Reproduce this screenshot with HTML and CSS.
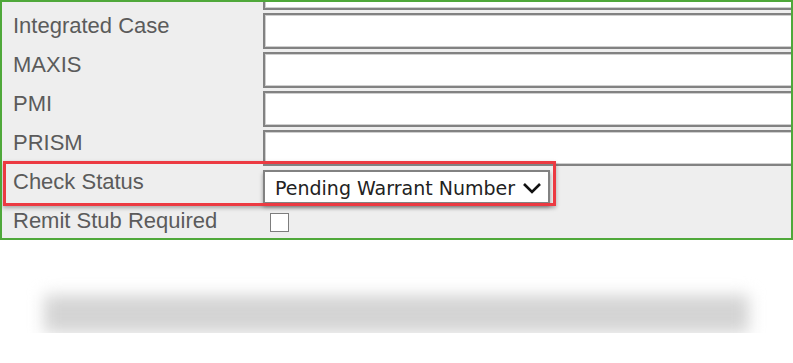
FILE: index.html
```html
<!DOCTYPE html>
<html lang="en">
<head>
  <meta charset="UTF-8">
  <title>Case Details</title>
  <link rel="stylesheet" href="styles.css">
</head>
<body>
  <div class="form-panel">
    <div class="form-rows">
      <div class="row row-cut">
        <div class="label"></div>
        <div class="field"><input class="text-input" type="text"></div>
      </div>
      <div class="row">
        <div class="label">Integrated Case</div>
        <div class="field"><input class="text-input" type="text"></div>
      </div>
      <div class="row">
        <div class="label">MAXIS</div>
        <div class="field"><input class="text-input" type="text"></div>
      </div>
      <div class="row">
        <div class="label">PMI</div>
        <div class="field"><input class="text-input" type="text"></div>
      </div>
      <div class="row">
        <div class="label">PRISM</div>
        <div class="field"><input class="text-input" type="text"></div>
      </div>
      <div class="row row-select">
        <div class="label">Check Status</div>
        <div class="field">
          <div class="select-box">
            <span>Pending Warrant Number</span>
            <svg class="chevron" width="20" height="12" viewBox="0 0 20 12">
              <polyline points="2,2 10,10 18,2" fill="none" stroke="#111" stroke-width="2.6"/>
            </svg>
          </div>
        </div>
      </div>
      <div class="row row-check">
        <div class="label">Remit Stub Required</div>
        <div class="field"><input class="check" type="checkbox"></div>
      </div>
    </div>
    <div class="callout"></div>
  </div>

  <div class="blur-bar"></div>
</body>
</html>
```

FILE: styles.css
```css
:root {
  --panel-bg: #eeeeee;
  --panel-border: #4fa83a;
  --label-color: #5b5b5b;
  --input-border: #828282;
  --callout: #ec3a42;
}

body {
  margin: 0;
  background: #ffffff;
  font-family: 'Liberation Sans', Arial, sans-serif;
}

.form-panel {
  position: relative;
  width: 793px;
  height: 240px;
  box-sizing: border-box;
  border: 2px solid var(--panel-border);
  background-color: var(--panel-bg);
  overflow: hidden;
}

.row {
  display: grid;
  grid-template-columns: 261px 1fr;
  height: 39px;
  padding-top: 1px;
  box-sizing: border-box;
}

/* first row is scrolled mostly out of view */
.row-cut {
  height: 10px;
  padding-top: 0;
  overflow: hidden;
}

.row-cut .text-input {
  margin-top: -28px;
}

.label {
  padding-left: 11px;
  font-size: 22px;
  line-height: 25px;
  color: var(--label-color);
  white-space: nowrap;
}

.text-input {
  display: block;
  width: 560px;
  height: 36px;
  box-sizing: border-box;
  margin: 0;
  border: 2px solid var(--input-border);
  box-shadow: inset 0 0 0 1px #cfcfcf;
  background: #ffffff;
}

.row-select .field {
  padding-top: 1px;
}

.select-box {
  display: flex;
  align-items: center;
  gap: 7px;
  width: 287px;
  height: 34px;
  box-sizing: border-box;
  padding: 2px 8px 0 10px;
  border: 2px solid var(--input-border);
  background: #ffffff;
  box-shadow: 0 3px 4px rgba(0, 0, 0, 0.35);
  font-family: 'DejaVu Sans', Verdana, sans-serif;
  font-size: 19px;
  color: #222222;
  white-space: nowrap;
}

.chevron {
  flex: none;
}

.row-check .field {
  padding: 5px 0 0 7px;
}

.check {
  appearance: none;
  display: block;
  margin: 0;
  width: 19px;
  height: 19px;
  border: 1.5px solid #7d7d7d;
  background: #ffffff;
}

/* red annotation drawn over the Check Status row */
.callout {
  position: absolute;
  left: 1px;
  top: 159px;
  width: 553px;
  height: 45px;
  box-sizing: border-box;
  border: 3px solid var(--callout);
  box-shadow: 0 2px 4px rgba(0, 0, 0, 0.3);
}

.blur-bar {
  margin: 55px 44px 0 44px;
  height: 38px;
  background: #d4d4d4;
  filter: blur(8px);
}
```
